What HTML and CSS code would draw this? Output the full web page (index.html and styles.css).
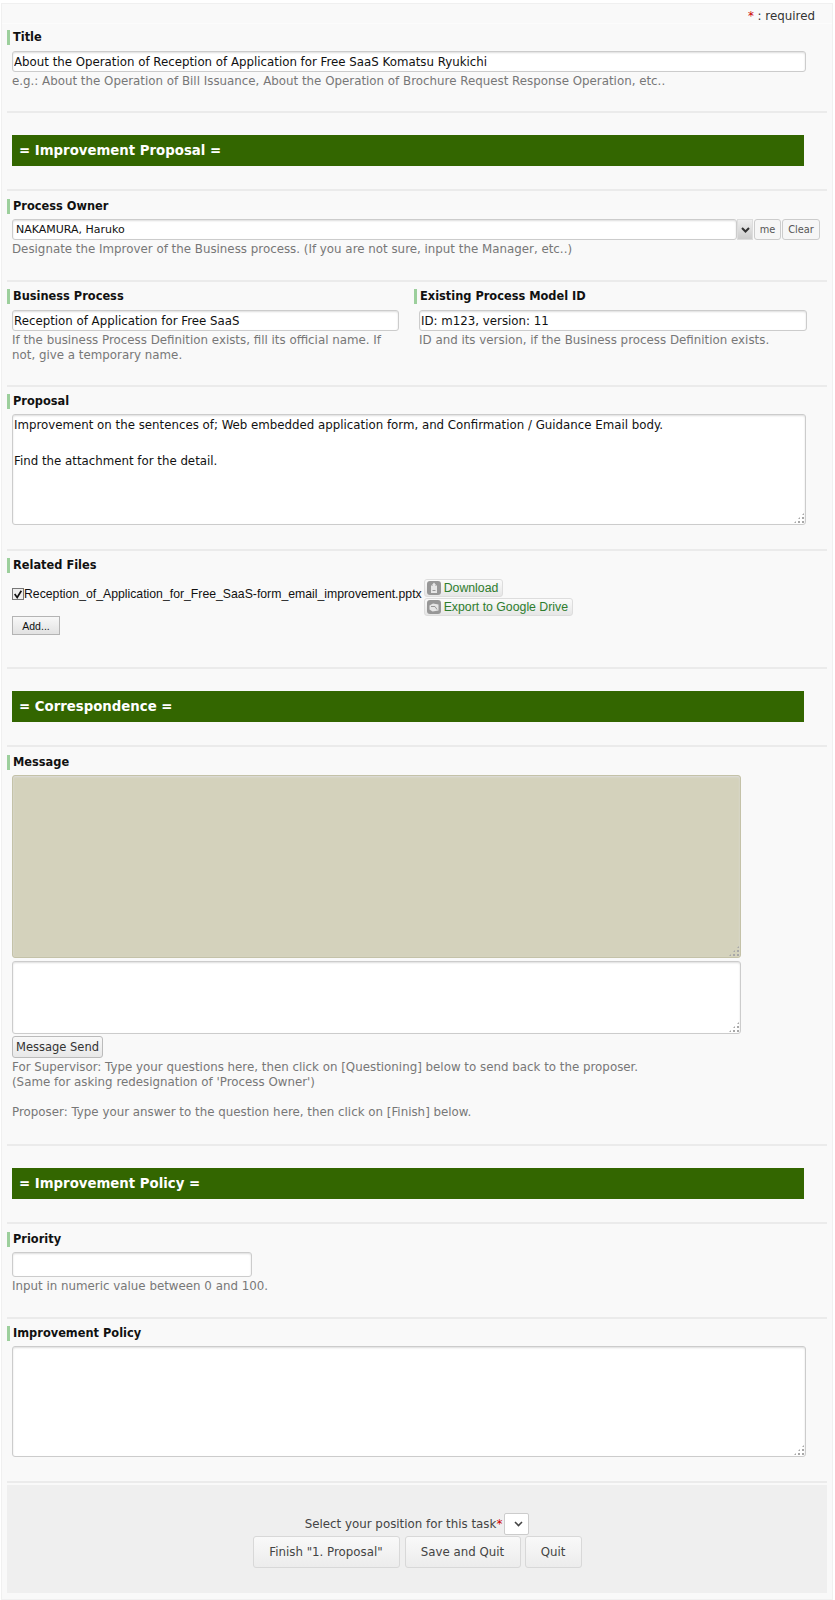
FILE: index.html
```html
<!DOCTYPE html>
<html lang="en">
<head>
<meta charset="utf-8">
<title>Improvement Proposal</title>
<link rel="stylesheet" href="styles.css">
</head>
<body>
<main class="panel">
  <div class="required"><span class="star">*</span> : required</div>

  <section class="row row-title">
    <h3 class="label">Title</h3>
    <input class="field" type="text" value="About the Operation of Reception of Application for Free SaaS Komatsu Ryukichi">
    <p class="help">e.g.: About the Operation of Bill Issuance, About the Operation of Brochure Request Response Operation, etc..</p>
  </section>

  <section class="row row-banner"><h2 class="banner">= Improvement Proposal =</h2></section>

  <section class="row row-owner">
    <h3 class="label">Process Owner</h3>
    <div class="owner">
      <input class="field owner-input" type="text" value="NAKAMURA, Haruko">
      <span class="drop"><svg width="9" height="6" viewBox="0 0 9 6"><path d="M1 1l3.500 3.500L8 1" fill="none" stroke="#333" stroke-width="2"/></svg></span>
      <button class="mini mini-me" type="button">me</button>
      <button class="mini mini-clear" type="button">Clear</button>
    </div>
    <p class="help">Designate the Improver of the Business process. (If you are not sure, input the Manager, etc..)</p>
  </section>

  <section class="row row-two">
    <div class="col col-left">
      <h3 class="label">Business Process</h3>
      <input class="field" type="text" value="Reception of Application for Free SaaS">
      <p class="help">If the business Process Definition exists, fill its official name. If not, give a temporary name.</p>
    </div>
    <div class="col col-right">
      <h3 class="label">Existing Process Model ID</h3>
      <input class="field" type="text" value="ID: m123, version: 11">
      <p class="help">ID and its version, if the Business process Definition exists.</p>
    </div>
  </section>

  <section class="row row-proposal">
    <h3 class="label">Proposal</h3>
    <div class="area-wrap wide tall">
      <textarea class="area">Improvement on the sentences of; Web embedded application form, and Confirmation / Guidance Email body.

Find the attachment for the detail.</textarea>
      <span class="grip"></span>
    </div>
  </section>

  <section class="row row-files">
    <h3 class="label">Related Files</h3>
    <div class="file">
      <span class="check"><svg width="12" height="11" viewBox="0 0 12 11"><path d="M2 5l3 4 5-8" fill="none" stroke="#111" stroke-width="2"/></svg></span>
      <span class="file-name">Reception_of_Application_for_Free_SaaS-form_email_improvement.pptx</span>
      <div class="file-actions">
        <a class="file-btn"><svg class="file-ico" width="14" height="14" viewBox="0 0 14 14"><rect width="14" height="14" rx="3" fill="#979797"/><path d="M4 4.500h6V12H4z" fill="#e6e6e6"/><path d="M7 1.500l2 2.500H8v3H6V4H5z" fill="#e6e6e6"/><path d="M5.500 9.500h3" stroke="#979797"/></svg>Download</a>
        <a class="file-btn"><svg class="file-ico" width="14" height="14" viewBox="0 0 14 14"><rect width="14" height="14" rx="3" fill="#979797"/><path d="M2.500 5.500L6 3.500l5.500 1v6l-6 1-3-2z" fill="#e6e6e6"/><path d="M4 6.500h4l2 3" fill="none" stroke="#979797"/></svg>Export to Google Drive</a>
      </div>
    </div>
    <button class="add" type="button">Add...</button>
  </section>

  <section class="row row-banner"><h2 class="banner">= Correspondence =</h2></section>

  <section class="row row-message">
    <h3 class="label">Message</h3>
    <div class="area-wrap msg log"><textarea class="area beige" readonly></textarea><span class="grip"></span></div>
    <div class="area-wrap msg input"><textarea class="area"></textarea><span class="grip"></span></div>
    <button class="send" type="button">Message Send</button>
    <p class="help">For Supervisor: Type your questions here, then click on [Questioning] below to send back to the proposer.<br>(Same for asking redesignation of 'Process Owner')<br><br>Proposer: Type your answer to the question here, then click on [Finish] below.</p>
  </section>

  <section class="row row-banner"><h2 class="banner">= Improvement Policy =</h2></section>

  <section class="row row-priority">
    <h3 class="label">Priority</h3>
    <input class="field priority" type="text">
    <p class="help">Input in numeric value between 0 and 100.</p>
  </section>

  <section class="row row-policy">
    <h3 class="label">Improvement Policy</h3>
    <div class="area-wrap wide tall"><textarea class="area"></textarea><span class="grip"></span></div>
  </section>

  <footer class="footer">
    <div class="position">Select your position for this task<span class="star">*</span><span class="select"><svg width="9" height="6" viewBox="0 0 9 6"><path d="M1 1l3.500 3.500L8 1" fill="none" stroke="#444" stroke-width="1.600"/></svg></span></div>
    <div class="actions">
      <button class="action finish" type="button">Finish "1. Proposal"</button>
      <button class="action save" type="button">Save and Quit</button>
      <button class="action quit" type="button">Quit</button>
    </div>
  </footer>
</main>
</body>
</html>
```
FILE: styles.css
```css
* { box-sizing: border-box; }
html, body { margin: 0; padding: 0; background: #fff; }
body { font-family: "DejaVu Sans", Verdana, sans-serif; font-size: 11.850px; color: #333; }
.panel { width: 832px; height: 1597px; margin: 3px 0 0 1px; padding: 0 5px 0 5px; background: #f9f9f9; border: 1px solid #f0f0f0; }
.required { height: 20px; padding: 4px 17px 0 0; text-align: right; line-height: 16px; margin: 0 -5px; border-bottom: 1px solid #fcfcfc; }
.star { color: #c00; }
.row { border-bottom: 2px solid #ebebeb; padding: 6px 0 0 0; }
.label { margin: 0; height: 15px; padding-left: 3px; border-left: 3px solid #9ccf9c; font-size: 11.400px; line-height: 15px; font-weight: bold; color: #111; }
.field { display: block; height: 21px; width: 794px; margin: 6px 0 0 5px; padding: 0 1px; font: 11.800px "DejaVu Sans", sans-serif; color: #111; background: #fff; border: 1px solid #ccc; border-radius: 3px; box-shadow: inset 0 1px 2px #ddd; }
.help { margin: 2px 0 0 5px; font-size: 11.850px; line-height: 15px; color: #777; }
.row-title { height: 89px; }
.row-banner { height: 78px; padding-top: 22px; }
.banner { margin: 0 0 0 5px; width: 792px; height: 31px; padding-left: 7px; background: #336600; color: #fff; font-size: 13.300px; line-height: 31px; font-weight: bold; }
.row-owner { height: 91px; padding-top: 8px; }
.owner { display: flex; margin: 5px 0 0 5px; }
.owner-input { margin: 0; width: 725px; flex: none; padding-left: 3px; font-size: 11px; }
.drop { width: 16px; height: 21px; flex: none; display: flex; align-items: center; justify-content: center; background: linear-gradient(#eee, #ccc); border: 1px solid #ddd; }
.mini { height: 21px; margin-left: 1px; padding: 0; font: 9.800px "DejaVu Sans", sans-serif; color: #555; background: #f6f6f6; border: 1px solid #ccc; border-radius: 3px; }
.mini-me { width: 27px; margin-left: 1px; }
.mini-clear { width: 38px; }
.row-two { display: flex; height: 105px; padding-top: 7px; }
.col-left { width: 407px; padding-right: 30px; }
.col-left .field { width: 387px; }
.col-right { width: 413px; }
.col-right .field { width: 388px; }
.row-proposal { height: 164px; padding-top: 7px; }
.area-wrap { position: relative; margin: 5px 0 0 5px; }
.wide { width: 794px; }
.tall { height: 111px; }
.area { display: block; width: 100%; height: 100%; padding: 1px; font: 11.800px/18px "DejaVu Sans", sans-serif; color: #111; background: #fff; border: 1px solid #ccc; border-radius: 3px; resize: none; box-shadow: inset 0 1px 2px #ddd; }
.grip { position: absolute; right: 1px; bottom: 1px; width: 12px; height: 12px; background: radial-gradient(circle, #a8a8a8 1.200px, transparent 1.400px) 0 0 / 4px 4px; clip-path: polygon(100% 0, 100% 100%, 0 100%); }
.row-files { height: 118px; padding-top: 7px; }
.file { display: flex; align-items: center; margin: 6px 0 0 5px; }
.check { width: 12px; height: 12px; display: flex; margin-bottom: 8px; background: #eee; border: 1px solid #777; flex: none; }
.file-name { color: #111; font-family: "Liberation Sans", sans-serif; font-size: 12.250px; margin-bottom: 8px; }
.file-actions { display: flex; flex-direction: column; align-items: flex-start; gap: 1px; margin-left: 2px; }
.file-btn { display: flex; align-items: center; gap: 3px; height: 18px; padding: 0 4px 0 2px; color: #2e7d2e; font-family: "Liberation Sans", sans-serif; font-size: 12.300px; background: linear-gradient(#fbfbfb, #e6e6e6); border: 1px solid #ddd; border-radius: 3px; }
.file-ico { flex: none; }
.add { display: block; margin: 0 0 0 5px; width: 48px; height: 19px; padding: 0; font: 10.500px "Liberation Sans", sans-serif; color: #111; background: linear-gradient(#f8f8f8, #e2e2e2); border: 1px solid #b4b4b4; }
.row-message { height: 399px; padding-top: 8px; }
.msg { width: 729px; }
.log { height: 183px; margin-top: 5px; }
.input { height: 73px; margin-top: 3px; }
.beige { background: #d4d2bc; border-color: #c4c2a8; }
.send { display: block; margin: 2px 0 0 5px; width: 91px; height: 22px; padding: 0; font: 11.500px "DejaVu Sans", sans-serif; color: #333; background: linear-gradient(#f8f8f8, #e8e8e8); border: 1px solid #bbb; border-radius: 3px; }
.row-priority { height: 95px; padding-top: 8px; }
.priority { width: 240px; height: 25px; margin-top: 5px; }
.row-priority .help { margin-top: 2px; }
.row-policy { height: 164px; padding-top: 7px; }
.row-policy .area-wrap { margin-top: 5px; }
.footer { height: 108px; margin: 2px 0 0; padding-top: 28px; background: #efefef; text-align: center; }
.position { display: flex; justify-content: center; align-items: center; height: 22px; color: #444; }
.select { width: 25px; height: 22px; margin-left: 2px; display: flex; align-items: center; justify-content: flex-end; padding-right: 5px; background: #fff; border: 1px solid #ccc; border-radius: 2px; }
.actions { display: flex; justify-content: center; gap: 5px; margin-top: 1px; }
.action { height: 32px; font: 11.800px "DejaVu Sans", sans-serif; color: #444; background: linear-gradient(#f9f9f9, #ececec); border: 1px solid #d8d8d8; border-radius: 3px; padding: 0; }
.finish { width: 147px; }
.save { width: 116px; }
.quit { width: 57px; margin-left: -1px; }
```
